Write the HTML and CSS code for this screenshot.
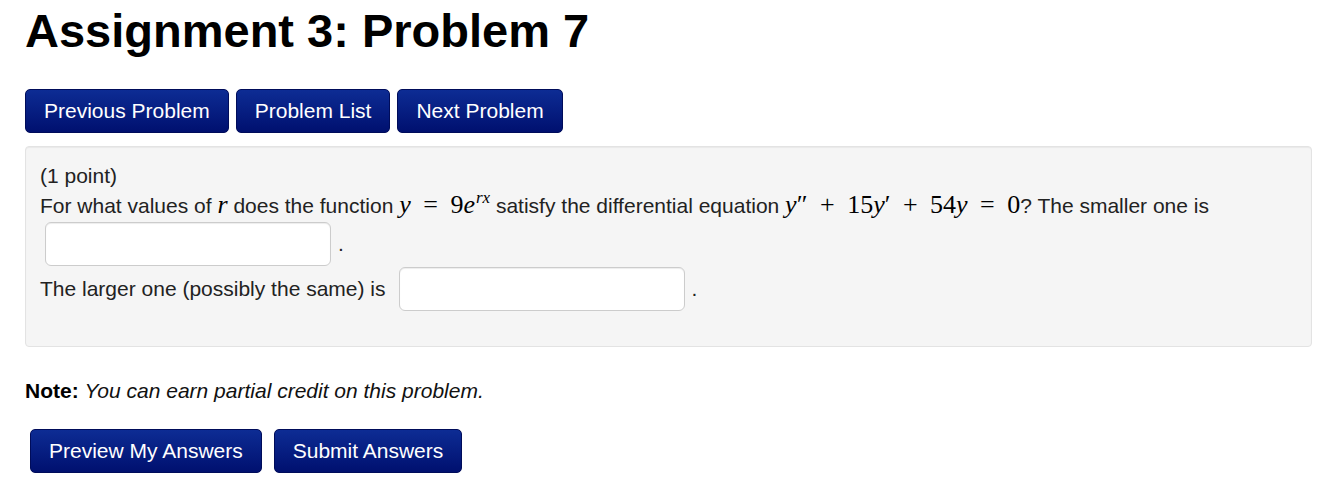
FILE: index.html
```html
<!doctype html>
<html>
<head>
<meta charset="utf-8">
<title>Assignment 3: Problem 7</title>
<link rel="stylesheet" href="styles.css">
</head>
<body>

<div id="page">
<h1>Assignment 3: Problem 7</h1>

<div class="nav">
 <span class="button">Previous Problem</span>
 <span class="button">Problem List</span>
 <span class="button">Next Problem</span>
</div>

<div class="well">
 <div class="line">(1 point)</div>
 <div class="line">For what values of <span class="math"><i>r</i></span> does the function
  <span class="math"><i>y</i> <span class="op">=</span> 9<i>e</i><sup><i>rx</i></sup></span> satisfy the differential equation
  <span class="math"><i>y</i>&Prime; <span class="op">+</span> 15<i>y</i>&prime; <span class="op">+</span> 54<i>y</i> <span class="op">=</span> 0</span>? The smaller one is</div>
 <div class="row first">
  <input type="text" class="answer">
  <span class="dot">.</span>
 </div>
 <div class="row">
  <span>The larger one (possibly the same) is</span>
  <input type="text" class="answer">
  <span class="dot">.</span>
 </div>
</div>

<p class="note"><b>Note:</b> <i>You can earn partial credit on this problem.</i></p>

<div class="submit">
 <span class="button">Preview My Answers</span>
 <span class="button">Submit Answers</span>
</div>
</div>

</body>
</html>
```

FILE: styles.css
```css
body {
	margin: 0;
	font-family: "Liberation Sans", Arial, sans-serif;
	color: #222;
	background: #fff;
}

#page { padding: 0 12px 0 25px; }

h1 {
	margin: 0;
	padding-top: 3px;
	font-size: 47px;
	line-height: 56px;
	color: #000;
}

.nav, .submit {
	display: flex;
	gap: 7px;
}
.nav { margin-top: 30px; }

.submit {
	gap: 12px;
	margin-left: 5px;
}

.button {
	display: inline-block;
	padding: 9px 18px 10px;
	font-size: 21px;
	line-height: 23px;
	color: #fff;
	background: linear-gradient(#0d2c94, #00106f);
	border: 1px solid #000c5a;
	border-radius: 5px;
	cursor: pointer;
}

.well {
	margin-top: 13px;
	padding: 14px 14px 35px;
	background-color: #f5f5f5;
	border: 1px solid #e3e3e3;
	border-radius: 4px;
	box-shadow: inset 0 1px 1px rgba(0,0,0,0.05);
	font-size: 21px;
	line-height: 30px;
}

.math {
	font-family: "Liberation Serif", "DejaVu Serif", serif;
	font-size: 26px;
	line-height: 10px;
	color: #000;
}
.math i { font-style: italic; }
.math sup { font-size: 17px; line-height: 0; margin-left: 1px; }
.math .op { padding: 0 6px; }

.row {
	display: flex;
	align-items: center;
	height: 45px;
}
.row.first { padding-left: 5px; }
.row span { white-space: pre; }

.answer {
	box-sizing: border-box;
	width: 286px;
	height: 44px;
	margin: 0 7px 0 0;
	border: 1px solid #ccc;
	border-radius: 6px;
	background: #fff;
	box-shadow: inset 0 1px 1px rgba(0,0,0,0.075);
	font-size: 21px;
}
.row span + .answer { margin-left: 13px; }

.dot { color: #222; }

.note {
	margin: 30px 0 24px;
	font-size: 21px;
	line-height: 28px;
	color: #111;
}
.note b { color: #000; }
```
